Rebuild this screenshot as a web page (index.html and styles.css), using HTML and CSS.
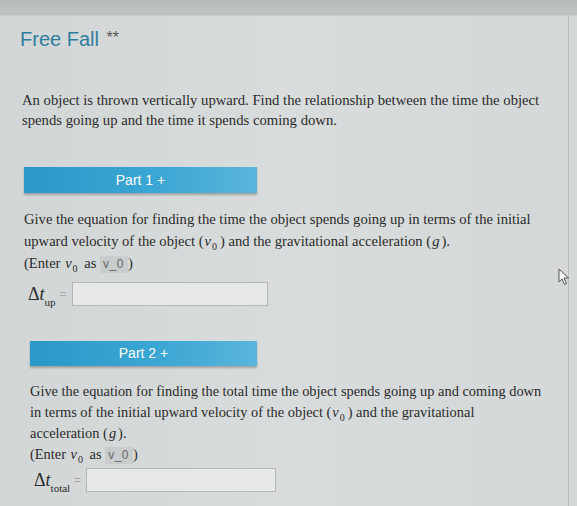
FILE: index.html
```html
<!DOCTYPE html>
<html>
<head>
<meta charset="utf-8">
<link rel="stylesheet" href="styles.css">
</head>
<body>
<div class="topbar"></div>
<div class="page">
  <h1 class="title">Free Fall <span class="stars">**</span></h1>
  <p class="intro">An object is thrown vertically upward. Find the relationship between the time the object spends going up and the time it spends coming down.</p>

  <section class="part part1">
    <div class="part-bar">Part 1 +</div>
    <div class="part-body">
      <p class="q">Give the equation for finding the time the object spends going up in terms of the initial upward velocity of the object (<span class="math"><i>v</i><sub>0</sub></span>) and the gravitational acceleration (<span class="math"><i>g</i></span>).</p>
      <p class="q">(Enter <span class="math"><i>v</i><sub>0</sub></span> as <span class="code">v_0</span>)</p>
      <div class="answer">
        <span class="label">&Delta;<i>t</i><sub>up</sub></span><span class="eq">=</span><span class="input input1"></span>
      </div>
    </div>
  </section>

  <section class="part part2">
    <div class="part-bar">Part 2 +</div>
    <div class="part-body">
      <p class="q">Give the equation for finding the total time the object spends going up and coming down in terms of the initial upward velocity of the object (<span class="math"><i>v</i><sub>0</sub></span>) and the gravitational acceleration (<span class="math"><i>g</i></span>).</p>
      <p class="q">(Enter <span class="math"><i>v</i><sub>0</sub></span> as <span class="code">v_0</span>)</p>
      <div class="answer">
        <span class="label">&Delta;<i>t</i><sub>total</sub></span><span class="eq">=</span><span class="input input2"></span>
      </div>
    </div>
  </section>
</div>
<div class="edge"></div>
<svg class="cursor" width="12" height="18" viewBox="0 0 12 18"><path d="M1 1 L1 14 L4 11 L6.5 16.5 L8.5 15.5 L6 10 L10.5 10 Z" fill="#f4f4f4" stroke="#555" stroke-width="1"/></svg>
</body>
</html>
```
FILE: styles.css
```css
html, body {
  margin: 0;
  padding: 0;
}
body {
  width: 577px;
  height: 506px;
  overflow: hidden;
  background: linear-gradient(90deg, #d3d6d6 0%, #d9dcdc 50%, #d5d8d8 100%);
  font-family: "Liberation Serif", "Times New Roman", serif;
  color: #2b2b2b;
  position: relative;
}
.topbar {
  height: 15px;
  background: linear-gradient(180deg, #b8bbbb, #c0c3c3);
  border-bottom: 1px solid #c9cccc;
}
.page {
  padding: 0 30px 0 20px;
}
.title {
  margin: 9px 0 0 0;
  font-family: "Liberation Sans", Arial, sans-serif;
  font-weight: normal;
  font-size: 20px;
  line-height: 26px;
  color: #2f7d9e;
}
.stars {
  font-size: 16px;
  color: #5a5a5a;
  vertical-align: 3px;
  margin-left: 2px;
}
.intro {
  margin: 38px 0 0 2px;
  font-size: 14.7px;
  line-height: 20px;
  width: 530px;
}
.part {
  margin-top: 37px;
}
.part1 {
  padding-left: 4px;
}
.part2 {
  margin-top: 34px;
  padding-left: 10px;
}
.part-bar {
  width: 233px;
  height: 26px;
  line-height: 26px;
  text-align: center;
  font-family: "Liberation Sans", Arial, sans-serif;
  font-size: 14px;
  color: #fff;
  background: linear-gradient(90deg, #2a98c8 0%, #3aa6d3 55%, #5ab5dc 100%);
  box-shadow: 0 2px 2px rgba(0, 0, 0, 0.25);
}
.part2 .part-bar {
  width: 227px;
  height: 25px;
  line-height: 25px;
}
.part-body {
  padding-top: 15px;
}
.q {
  margin: 0;
  font-size: 14.6px;
  line-height: 22px;
  width: 515px;
}
.part2 .q {
  font-size: 14.4px;
  line-height: 21px;
  width: 514px;
}
.math {
  padding: 0 1px;
}
.math i {
  padding-right: 1px;
}
.math sub {
  padding-right: 2px;
}
.q sub, .label sub {
  font-size: 10px;
  vertical-align: -4px;
  line-height: 0;
}
.code {
  display: inline-block;
  background: #c9cccc;
  color: #666;
  font-family: "Liberation Sans", Arial, sans-serif;
  font-size: 12px;
  line-height: 17px;
  padding: 0 4px 0 3px;
  letter-spacing: 0.5px;
}
.answer {
  display: flex;
  align-items: center;
  margin-top: 7px;
  margin-left: 4px;
  height: 26px;
}
.part2 .answer {
  margin-top: 2px;
}
.label {
  font-size: 18px;
}
.label sub {
  font-size: 11px;
  vertical-align: -6px;
}
.eq {
  color: #aaa;
  font-family: "Liberation Sans", Arial, sans-serif;
  font-size: 12px;
  margin-left: 4px;
  margin-right: 5px;
}
.input {
  display: block;
  height: 22px;
  background: #e7e9e9;
  border: 1px solid #b5b8b8;
}
.input1 {
  width: 194px;
}
.input2 {
  width: 188px;
}
.edge {
  position: absolute;
  top: 16px;
  right: 8px;
  width: 1px;
  height: 490px;
  background: #b9bcbc;
}
.cursor {
  position: absolute;
  left: 558px;
  top: 268px;
}
```
